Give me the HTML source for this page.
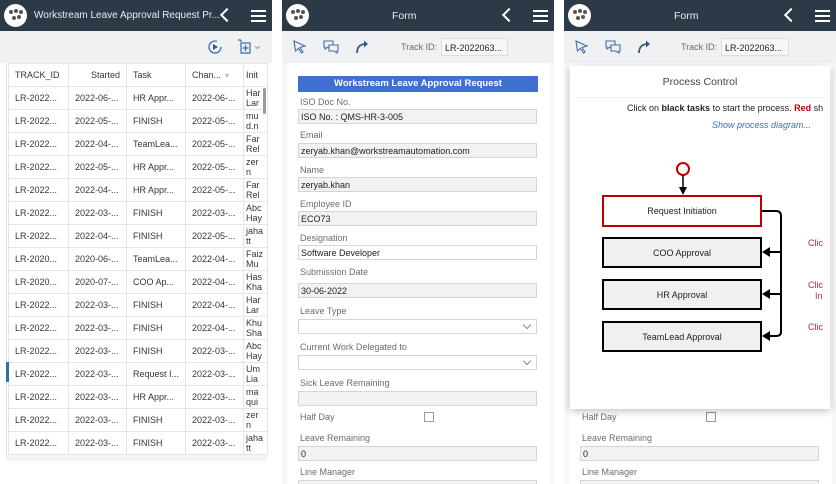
<!DOCTYPE html>
<html><head><meta charset="utf-8"><style>
*{margin:0;padding:0;box-sizing:border-box}
body{width:836px;height:484px;background:#fff;position:relative;overflow:hidden;font-family:"Liberation Sans",sans-serif;color:#32363a}
.p{position:absolute;top:0;width:272px;height:484px;background:#f7f7f7;overflow:hidden}
.hd{position:absolute;left:0;top:0;width:272px;height:31px;background:#2c3a47;color:#fff}
.logo{position:absolute;left:4px;top:4px;width:23px;height:23px;border-radius:50%;background:#fff}
.logo i{position:absolute;width:4px;height:4px;border-radius:50%;background:#555}
.ttl{position:absolute;top:10px;font-size:10.5px;color:#e8ecf0}
.bk{position:absolute;left:222px;top:10px;width:10px;height:10px;border-left:2.5px solid #fff;border-bottom:2.5px solid #fff;transform:rotate(45deg)}
.mn{position:absolute;left:251px;top:10px;width:15px;height:2px;background:#fff;box-shadow:0 5px 0 #fff,0 10px 0 #fff}
.tb{position:absolute;left:0;top:31px;width:272px;height:32px;background:#f0f1f2}
.a{position:absolute;white-space:nowrap}
table{position:absolute;left:8px;top:63px;border-collapse:collapse;font-size:9px;background:#fff}
td{border:1px solid #e5e5e5;height:23px;padding:0 6px;white-space:nowrap;overflow:hidden;color:#32363a}
.form{position:absolute;left:5px;top:63px;width:263px;height:430px;background:#fff}
.lb{position:absolute;left:13px;font-size:9px;color:#6a6d70}
.fd{position:absolute;left:11px;width:239px;height:15px;background:#f2f2f2;border:1px solid #d5d5d5;font-size:9px;padding:2px 2px;color:#222}
.fw{background:#fff}
.chev{position:absolute;right:6px;top:2px;width:6px;height:6px;border-right:1px solid #888;border-bottom:1px solid #888;transform:rotate(45deg)}
</style></head><body>

<!-- PANEL 1 -->
<div class="p" style="left:0;background:#fff">
 <div class="hd"><div class="logo"><i style="left:5px;top:6px"></i><i style="left:10px;top:5px"></i><i style="left:15px;top:6px"></i><i style="left:8px;top:12px"></i><i style="left:13px;top:11px"></i></div>
 <div class="ttl" style="left:34px;font-size:10px">Workstream Leave Approval Request Pr...</div><div class="bk"></div><div class="mn"></div></div>
 <div class="tb">
  <svg class="a" style="left:207px;top:8px" width="16" height="16"><circle cx="8" cy="8" r="6" fill="none" stroke="#3d6ea8" stroke-width="1.3" stroke-dasharray="30 8"/><path d="M6 5 L11 8 L6 11Z" fill="#2d5a8a"/></svg>
  <svg class="a" style="left:236px;top:7px" width="28" height="18"><path d="M2 2h3M5 2v2M5 5h9v10H5z" fill="none" stroke="#3d6ea8" stroke-width="1.2"/><path d="M9.5 7v6M6.5 10h6" stroke="#3d6ea8" stroke-width="1.3"/><path d="M19 8l2.5 2.5L24 8" fill="none" stroke="#999" stroke-width="1"/></svg>
 </div>
 <div class="a" style="left:6px;top:63px;width:1px;height:393px;background:#e0e0e0"></div>
 <table>
  <tr style="height:23px"><td style="width:60px">TRACK_ID</td><td style="width:58px;text-align:right">Started</td><td style="width:57px">Task</td><td style="width:58px">Chan... <span style="color:#bbb;font-size:7px">▼</span></td><td style="width:24px;padding:0 2px">Init</td></tr>
  <tr><td>LR-2022...</td><td>2022-06-...</td><td>HR Appr...</td><td>2022-06-...</td><td style="padding:0 2px;line-height:10px">Har<br>Lar</td></tr>
  <tr><td>LR-2022...</td><td>2022-05-...</td><td>FINISH</td><td>2022-05-...</td><td style="padding:0 2px;line-height:10px">mu<br>d.n</td></tr>
  <tr><td>LR-2022...</td><td>2022-04-...</td><td>TeamLea...</td><td>2022-05-...</td><td style="padding:0 2px;line-height:10px">Far<br>Rel</td></tr>
  <tr><td>LR-2022...</td><td>2022-05-...</td><td>HR Appr...</td><td>2022-05-...</td><td style="padding:0 2px;line-height:10px">zer<br>n</td></tr>
  <tr><td>LR-2022...</td><td>2022-04-...</td><td>HR Appr...</td><td>2022-05-...</td><td style="padding:0 2px;line-height:10px">Far<br>Rel</td></tr>
  <tr><td>LR-2022...</td><td>2022-03-...</td><td>FINISH</td><td>2022-03-...</td><td style="padding:0 2px;line-height:10px">Abc<br>Hay</td></tr>
  <tr><td>LR-2022...</td><td>2022-04-...</td><td>FINISH</td><td>2022-05-...</td><td style="padding:0 2px;line-height:10px">jaha<br>tt</td></tr>
  <tr><td>LR-2020...</td><td>2020-06-...</td><td>TeamLea...</td><td>2022-04-...</td><td style="padding:0 2px;line-height:10px">Faiz<br>Mu</td></tr>
  <tr><td>LR-2020...</td><td>2020-07-...</td><td>COO Ap...</td><td>2022-04-...</td><td style="padding:0 2px;line-height:10px">Has<br>Kha</td></tr>
  <tr><td>LR-2022...</td><td>2022-03-...</td><td>FINISH</td><td>2022-04-...</td><td style="padding:0 2px;line-height:10px">Har<br>Lar</td></tr>
  <tr><td>LR-2022...</td><td>2022-03-...</td><td>FINISH</td><td>2022-04-...</td><td style="padding:0 2px;line-height:10px">Khu<br>Sha</td></tr>
  <tr><td>LR-2022...</td><td>2022-03-...</td><td>FINISH</td><td>2022-03-...</td><td style="padding:0 2px;line-height:10px">Abc<br>Hay</td></tr>
  <tr><td>LR-2022...</td><td>2022-03-...</td><td>Request I...</td><td>2022-03-...</td><td style="padding:0 2px;line-height:10px">Um<br>Lia</td></tr>
  <tr><td>LR-2022...</td><td>2022-03-...</td><td>HR Appr...</td><td>2022-03-...</td><td style="padding:0 2px;line-height:10px">ma<br>qui</td></tr>
  <tr><td>LR-2022...</td><td>2022-03-...</td><td>FINISH</td><td>2022-03-...</td><td style="padding:0 2px;line-height:10px">zer<br>n</td></tr>
  <tr><td>LR-2022...</td><td>2022-03-...</td><td>FINISH</td><td>2022-03-...</td><td style="padding:0 2px;line-height:10px">jaha<br>tt</td></tr>
 </table>
 <div class="a" style="left:6px;top:362px;width:3px;height:20px;background:#2f6fa8"></div>
 <div class="a" style="left:263px;top:88px;width:3px;height:26px;background:#999;border-radius:2px"></div>
 <div class="a" style="left:6px;top:455px;width:261px;height:6px;background:#f4f4f4"></div>
</div>

<!-- PANEL 2 -->
<div class="p" style="left:282px">
 <div class="hd"><div class="logo"><i style="left:5px;top:6px"></i><i style="left:10px;top:5px"></i><i style="left:15px;top:6px"></i><i style="left:8px;top:12px"></i><i style="left:13px;top:11px"></i></div>
 <div class="ttl" style="left:110px">Form</div><div class="bk"></div><div class="mn"></div></div>
 <div class="tb">
  <svg class="a" style="left:10px;top:8px" width="16" height="16"><path d="M2 2 L13 7 L8 8.5 L11 13 L9.5 14 L6.5 9.5 L3.5 12Z" fill="none" stroke="#3d6ea8" stroke-width="1.1"/></svg>
  <svg class="a" style="left:40px;top:8px" width="18" height="16"><path d="M2 2h9v6H6l-3 2V8H2z" fill="none" stroke="#3d6ea8" stroke-width="1.1"/><path d="M7 6h9v6h-1v2l-3-2H7z" fill="#f0f1f2" stroke="#3d6ea8" stroke-width="1.1"/></svg>
  <svg class="a" style="left:72px;top:8px" width="16" height="16"><path d="M3 14 C3 8 6 5 12 5" fill="none" stroke="#2d5a8a" stroke-width="1.8"/><path d="M10 1.5 L14 5 L10 8.5Z" fill="#2d5a8a"/></svg>
  <div class="a" style="left:119px;top:11px;font-size:9px;color:#6a6d70">Track ID:</div>
  <div class="a" style="left:159px;top:7px;width:67px;height:18px;background:#f7f7f7;border:1px solid #ddd;font-size:9px;padding:4px 3px;color:#222">LR-2022063...</div>
 </div>
 <div class="form">
  <div class="a" style="left:11px;top:13px;width:240px;height:16px;background:#3f6fd0;color:#fff;font-size:9.5px;font-weight:bold;text-align:center;line-height:16px">Workstream Leave Approval Request</div>
  <div class="lb" style="top:34px">ISO Doc No.</div><div class="fd" style="top:46px">ISO No. : QMS-HR-3-005</div>
  <div class="lb" style="top:67px">Email</div><div class="fd" style="top:80px">zeryab.khan@workstreamautomation.com</div>
  <div class="lb" style="top:102px">Name</div><div class="fd" style="top:114px">zeryab.khan</div>
  <div class="lb" style="top:136px">Employee ID</div><div class="fd" style="top:148px">ECO73</div>
  <div class="lb" style="top:170px">Designation</div><div class="fd fw" style="top:182px">Software Developer</div>
  <div class="lb" style="top:204px">Submission Date</div><div class="fd" style="top:220px">30-06-2022</div>
  <div class="lb" style="top:243px">Leave Type</div><div class="fd fw" style="top:256px"><div class="chev"></div></div>
  <div class="lb" style="top:279px">Current Work Delegated to</div><div class="fd fw" style="top:292px"><div class="chev"></div></div>
  <div class="lb" style="top:315px">Sick Leave Remaining</div><div class="fd" style="top:328px"></div>
  <div class="lb" style="top:349px">Half Day</div><div class="a" style="left:137px;top:349px;width:10px;height:10px;border:1px solid #999;background:#fff"></div>
  <div class="lb" style="top:370px">Leave Remaining</div><div class="fd" style="top:383px">0</div>
  <div class="lb" style="top:404px">Line Manager</div><div class="fd" style="top:417px"></div>
 </div>
</div>

<!-- PANEL 3 -->
<div class="p" style="left:564px">
 <div class="hd"><div class="logo"><i style="left:5px;top:6px"></i><i style="left:10px;top:5px"></i><i style="left:15px;top:6px"></i><i style="left:8px;top:12px"></i><i style="left:13px;top:11px"></i></div>
 <div class="ttl" style="left:110px">Form</div><div class="bk"></div><div class="mn"></div></div>
 <div class="tb">
  <svg class="a" style="left:10px;top:8px" width="16" height="16"><path d="M2 2 L13 7 L8 8.5 L11 13 L9.5 14 L6.5 9.5 L3.5 12Z" fill="none" stroke="#3d6ea8" stroke-width="1.1"/></svg>
  <svg class="a" style="left:40px;top:8px" width="18" height="16"><path d="M2 2h9v6H6l-3 2V8H2z" fill="none" stroke="#3d6ea8" stroke-width="1.1"/><path d="M7 6h9v6h-1v2l-3-2H7z" fill="#f0f1f2" stroke="#3d6ea8" stroke-width="1.1"/></svg>
  <svg class="a" style="left:72px;top:8px" width="16" height="16"><path d="M3 14 C3 8 6 5 12 5" fill="none" stroke="#2d5a8a" stroke-width="1.8"/><path d="M10 1.5 L14 5 L10 8.5Z" fill="#2d5a8a"/></svg>
  <div class="a" style="left:117px;top:11px;font-size:9px;color:#6a6d70">Track ID:</div>
  <div class="a" style="left:157px;top:7px;width:68px;height:18px;background:#f7f7f7;border:1px solid #ddd;font-size:9px;padding:4px 3px;color:#222">LR-2022063...</div>
 </div>
 <div class="form">
  <div class="lb" style="top:349px">Half Day</div><div class="a" style="left:137px;top:349px;width:10px;height:10px;border:1px solid #999;background:#fff"></div>
  <div class="lb" style="top:370px">Leave Remaining</div><div class="fd" style="top:383px">0</div>
  <div class="lb" style="top:404px">Line Manager</div><div class="fd" style="top:417px"></div>
 </div>
 <!-- popup -->
 <div class="a" style="left:6px;top:66px;width:260px;height:343px;background:#fff;box-shadow:0 2px 8px rgba(0,0,0,.25);overflow:hidden">
  <div class="a" style="left:0;top:10px;width:260px;text-align:center;font-size:10.5px;color:#444">Process Control</div>
  <div class="a" style="left:6px;top:31px;width:250px;height:1px;background:#eee"></div>
  <div class="a" style="left:57px;top:37px;font-size:9px;color:#222">Click on <b>black tasks</b> to start the process. <b style="color:#b00">Red</b> sh</div>
  <div class="a" style="left:142px;top:54px;font-size:9px;color:#3a6fb0;font-style:italic">Show process diagram...</div>
  <svg class="a" style="left:0;top:0" width="260" height="343">
   <circle cx="113" cy="103" r="6" fill="#fff" stroke="#b00" stroke-width="2"/>
   <path d="M113 109V122" stroke="#000" stroke-width="1.5"/><path d="M109 121L113 129L117 121Z" fill="#000"/>
   <rect x="33" y="130" width="158" height="30" fill="#fff" stroke="#b00" stroke-width="2"/>
   <rect x="33" y="172" width="158" height="29" fill="#f0f0f0" stroke="#000" stroke-width="2"/>
   <rect x="33" y="214" width="158" height="29" fill="#f0f0f0" stroke="#000" stroke-width="2"/>
   <rect x="33" y="256" width="158" height="29" fill="#f0f0f0" stroke="#000" stroke-width="2"/>
   <path d="M192 145H206Q211 145 211 150V266Q211 270 206 270H200M211 186H200M211 228H200" fill="none" stroke="#000" stroke-width="2"/>
   <path d="M200 181L192 186L200 191ZM200 223L192 228L200 233ZM200 265L192 270L200 275Z" fill="#000"/>
   <text x="112" y="148" font-size="9" text-anchor="middle" fill="#222" font-family="Liberation Sans">Request Initiation</text>
   <text x="112" y="190" font-size="9" text-anchor="middle" fill="#222" font-family="Liberation Sans">COO Approval</text>
   <text x="112" y="232" font-size="9" text-anchor="middle" fill="#222" font-family="Liberation Sans">HR Approval</text>
   <text x="112" y="274" font-size="9" text-anchor="middle" fill="#222" font-family="Liberation Sans">TeamLead Approval</text>
   <text x="238" y="180" font-size="9" fill="#b03030" font-family="Liberation Sans">Clic</text>
   <text x="238" y="222" font-size="9" fill="#b03030" font-family="Liberation Sans">Clic</text>
   <text x="245" y="233" font-size="9" fill="#b03030" font-family="Liberation Sans">In</text>
   <text x="238" y="264" font-size="9" fill="#b03030" font-family="Liberation Sans">Clic</text>
  </svg>
 </div>
</div>
</body></html>
